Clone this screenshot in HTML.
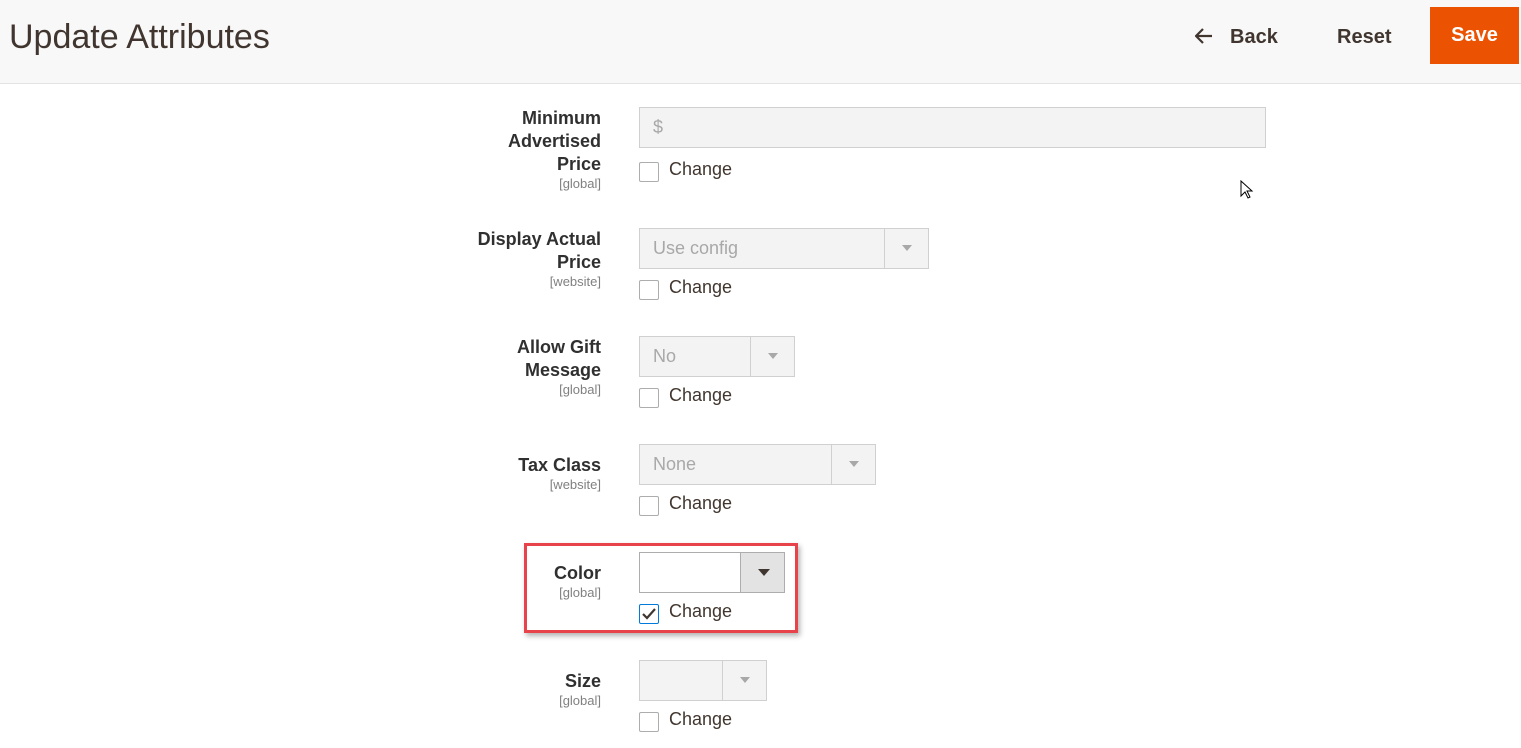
<!DOCTYPE html>
<html><head><meta charset="utf-8"><style>
*{margin:0;padding:0;box-sizing:border-box}
body{width:1521px;height:748px;background:#fff;font-family:"Liberation Sans",sans-serif;position:relative;overflow:hidden;color:#303030}
.hdr{position:absolute;left:0;top:0;width:1521px;height:84px;background:#f8f8f8;border-bottom:1px solid #e3e3e3}
.title{position:absolute;left:9px;top:18px;font-size:34px;color:#41362f}
.btn{position:absolute;top:26px;font-size:20px;font-weight:bold;color:#41362f}
.save{position:absolute;left:1430px;top:7px;width:89px;height:57px;background:#eb5202;color:#fff;font-size:20px;font-weight:bold;text-align:center;line-height:57px}
.lbl{position:absolute;right:920px;text-align:right;font-size:18px;line-height:23px;font-weight:bold;color:#303030}
.lbl span{display:block;font-size:13px;line-height:16px;font-weight:normal;color:#808080}
.in{position:absolute;left:639px;height:41px;background:#f3f3f3;border:1px solid #d0d0d0;font-size:18px;color:#a8a8a8;padding-left:13px;line-height:39px}
.sel .arr{position:absolute;right:0;top:0;width:44px;height:39px;border-left:1px solid #d0d0d0}
.arr svg{position:absolute;left:17px;top:16px}
.cb{position:absolute;left:639px;width:20px;height:20px;border:1px solid #adadad;border-radius:2px;background:#fff}
.ch{position:absolute;left:669px;font-size:18px;color:#41362f}
</style></head><body>
<div class="hdr">
<div class="title">Update Attributes</div>
<svg style="position:absolute;left:1195px;top:28px" width="18" height="16" viewBox="0 0 18 16"><path d="M8 1L1 8l7 7M1 8h16" stroke="#41362f" stroke-width="2.2" fill="none"/></svg>
<div class="btn" style="left:1230px">Back</div>
<div class="btn" style="left:1337px">Reset</div>
<div class="save">Save</div>
</div>

<div class="lbl" style="top:107px">Minimum<br>Advertised<br>Price<span>[global]</span></div>
<div class="in" style="top:107px;width:627px">$</div>
<div class="cb" style="top:162px"></div><div class="ch" style="top:159px">Change</div>

<div class="lbl" style="top:228px">Display Actual<br>Price<span>[website]</span></div>
<div class="in sel" style="top:228px;width:290px">Use config<div class="arr"><svg width="10" height="6"><path d="M0 0h10L5 6z" fill="#a8a8a8"/></svg></div></div>
<div class="cb" style="top:280px"></div><div class="ch" style="top:277px">Change</div>

<div class="lbl" style="top:336px">Allow Gift<br>Message<span>[global]</span></div>
<div class="in sel" style="top:336px;width:156px">No<div class="arr"><svg width="10" height="6"><path d="M0 0h10L5 6z" fill="#a8a8a8"/></svg></div></div>
<div class="cb" style="top:388px"></div><div class="ch" style="top:385px">Change</div>

<div class="lbl" style="top:454px">Tax Class<span>[website]</span></div>
<div class="in sel" style="top:444px;width:237px">None<div class="arr"><svg width="10" height="6"><path d="M0 0h10L5 6z" fill="#a8a8a8"/></svg></div></div>
<div class="cb" style="top:496px"></div><div class="ch" style="top:493px">Change</div>

<div style="position:absolute;left:524px;top:543px;width:274px;height:90px;border:3px solid #e8434a;box-shadow:2px 3px 5px rgba(0,0,0,.3)"></div>
<div class="lbl" style="top:562px">Color<span>[global]</span></div>
<div class="in sel" style="top:552px;width:146px;background:#fff;border-color:#adadad"><div class="arr" style="background:#e3e3e3;border-left-color:#adadad"><svg width="12" height="7"><path d="M0 0h12L6 7z" fill="#41362f"/></svg></div></div>
<div class="cb" style="top:604px;border-color:#007bdb"><svg style="position:absolute;left:2px;top:3px" width="14" height="12"><path d="M1 6l4 4 8-9" stroke="#41362f" stroke-width="2.2" fill="none"/></svg></div>
<div class="ch" style="top:601px">Change</div>

<div class="lbl" style="top:670px">Size<span>[global]</span></div>
<div class="in sel" style="top:660px;width:128px"><div class="arr"><svg width="10" height="6"><path d="M0 0h10L5 6z" fill="#a8a8a8"/></svg></div></div>
<div class="cb" style="top:712px"></div><div class="ch" style="top:709px">Change</div>

<svg style="position:absolute;left:1240px;top:180px" width="14" height="20" viewBox="0 0 14 20"><path d="M1 1v15l4-4 3 6 2-1-3-6h5z" fill="#fff" stroke="#000" stroke-width="1"/></svg>
</body></html>
